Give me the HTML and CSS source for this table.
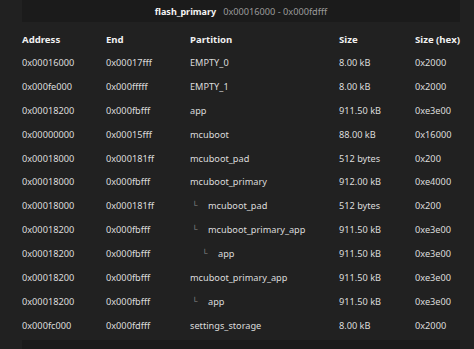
FILE: index.html
```html
<!DOCTYPE html>
<html lang="en">

<head>
    <meta charset="UTF-8">
    <title>Partition Table</title>
    <link rel="stylesheet" href="styles.css">
</head>

<body>
    <div class="region-view">
        <div class="region-header">
            <span class="region-name">flash_primary</span>
            <span class="region-range">0x00016000 - 0x000fdfff</span>
        </div>

        <table class="partition-table">
            <colgroup>
                <col class="col-addr">
                <col class="col-end">
                <col class="col-name">
                <col class="col-size">
                <col class="col-hex">
            </colgroup>
            <thead>
                <tr>
                    <th>Address</th>
                    <th>End</th>
                    <th>Partition</th>
                    <th>Size</th>
                    <th>Size (hex)</th>
                </tr>
            </thead>
            <tbody>
                <tr>
                    <td>0x00016000</td><td class="end">0x00017fff</td>
                    <td>EMPTY_0</td><td>8.00 kB</td><td>0x2000</td>
                </tr>
                <tr>
                    <td>0x000fe000</td><td class="end">0x000fffff</td>
                    <td>EMPTY_1</td><td>8.00 kB</td><td>0x2000</td>
                </tr>
                <tr>
                    <td>0x00018200</td><td class="end">0x000fbfff</td>
                    <td>app</td><td>911.50 kB</td><td>0xe3e00</td>
                </tr>
                <tr>
                    <td>0x00000000</td><td class="end">0x00015fff</td>
                    <td>mcuboot</td><td>88.00 kB</td><td>0x16000</td>
                </tr>
                <tr>
                    <td>0x00018000</td><td class="end">0x000181ff</td>
                    <td>mcuboot_pad</td><td>512 bytes</td><td>0x200</td>
                </tr>
                <tr>
                    <td>0x00018000</td><td class="end">0x000fbfff</td>
                    <td>mcuboot_primary</td><td>912.00 kB</td><td>0xe4000</td>
                </tr>
                <tr>
                    <td>0x00018000</td><td class="end">0x000181ff</td>
                    <td><span class="tree level-1">└</span>mcuboot_pad</td><td>512 bytes</td><td>0x200</td>
                </tr>
                <tr>
                    <td>0x00018200</td><td class="end">0x000fbfff</td>
                    <td><span class="tree level-1">└</span>mcuboot_primary_app</td><td>911.50 kB</td><td>0xe3e00</td>
                </tr>
                <tr>
                    <td>0x00018200</td><td class="end">0x000fbfff</td>
                    <td><span class="tree level-2">└</span>app</td><td>911.50 kB</td><td>0xe3e00</td>
                </tr>
                <tr>
                    <td>0x00018200</td><td class="end">0x000fbfff</td>
                    <td>mcuboot_primary_app</td><td>911.50 kB</td><td>0xe3e00</td>
                </tr>
                <tr>
                    <td>0x00018200</td><td class="end">0x000fbfff</td>
                    <td><span class="tree level-1">└</span>app</td><td>911.50 kB</td><td>0xe3e00</td>
                </tr>
                <tr>
                    <td>0x000fc000</td><td class="end">0x000fdfff</td>
                    <td>settings_storage</td><td>8.00 kB</td><td>0x2000</td>
                </tr>
            </tbody>
        </table>

        <div class="region-footer"></div>
    </div>
</body>

</html>
```

FILE: styles.css
```css
body {
    margin: 0;
    background: #212121;
    font-family: "Noto Sans", "Open Sans", sans-serif;
    font-size: 9.2px;
    color: #dcdcdc;
}

.region-view {
    padding: 0 14px 0 22px;
    height: 349px;
    overflow: hidden;
}

.region-header {
    height: 22px;
    background: #1b1b1b;
    display: flex;
    justify-content: center;
    align-items: center;
    gap: 7px;
}

.region-name {
    font-weight: bold;
    font-size: 9px;
    color: #f4f4f4;
}

.region-range {
    font-size: 9.2px;
    color: #9a9a9a;
}

.partition-table {
    width: 100%;
    table-layout: fixed;
    border-collapse: collapse;
    margin-top: 5.5px;
}

.col-addr { width: 84px; }
.col-end { width: 84px; }
.col-name { width: 149px; }
.col-size { width: 76px; }

.partition-table th {
    text-align: left;
    font-weight: bold;
    font-size: 9.6px;
    color: #f0f0f0;
    height: 23px;
    padding: 0;
    white-space: nowrap;
}

.partition-table td {
    height: 23.9px;
    padding: 0;
    white-space: nowrap;
}

.tree {
    display: inline-block;
    color: #8c8c8c;
    font-size: 8px;
    width: 16px;
    vertical-align: 1px;
}

.tree.level-1 {
    margin-left: 2px;
}

.tree.level-2 {
    margin-left: 12px;
}

.region-footer {
    height: 12px;
    margin-top: 2.7px;
    background: #1b1b1b;
}
```
